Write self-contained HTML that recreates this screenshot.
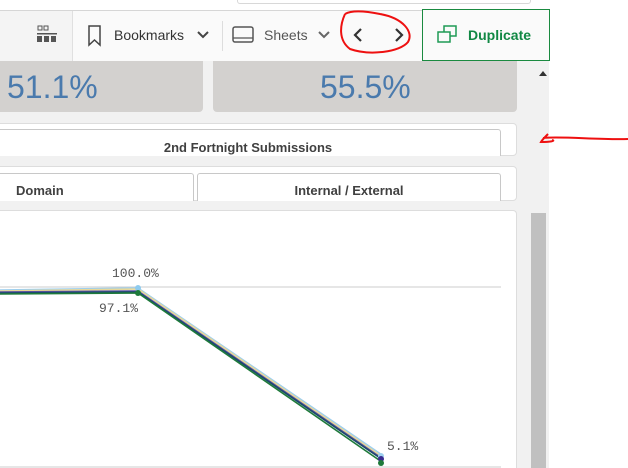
<!DOCTYPE html>
<html><head><style>
*{margin:0;padding:0;box-sizing:border-box}
html,body{width:628px;height:468px;overflow:hidden}
body{background:#fff;font-family:"Liberation Sans",sans-serif;position:relative}
.a{position:absolute}
.btn{position:absolute;background:#fff;border:1px solid #c8c8c8;border-bottom:none;border-radius:3px 3px 0 0;font-weight:bold;font-size:13px;color:#404040;text-align:center}
</style></head><body>
<div class="a" style="left:237px;top:0;width:294px;height:4px;border:1px solid #d8d8d8;border-top:none;border-radius:0 0 3px 3px"></div>
<div class="a" style="left:0;top:10px;width:549px;height:51px;background:#fafafa;border-top:1px solid #d6d6d6"></div>
<div class="a" style="left:0;top:11px;width:73px;height:50px;background:#f4f4f4;border-right:1px solid #e0e0e0"></div>
<svg class="a" style="left:37px;top:25px" width="22" height="20"><g fill="#555"><rect x="1" y="1" width="4" height="4" fill="none" stroke="#555" stroke-width="1"/><rect x="7" y="1" width="4" height="4" fill="none" stroke="#555" stroke-width="1"/><rect x="0" y="8" width="20" height="1.5"/><rect x="0" y="11" width="5" height="6"/><rect x="7" y="11" width="5" height="6"/><rect x="14" y="11" width="5" height="6"/></g></svg>
<svg class="a" style="left:87px;top:25px" width="16" height="22"><path d="M2 1h11v19l-5.5-5-5.5 5z" fill="none" stroke="#444" stroke-width="1.5"/></svg>
<div class="a" style="left:114px;top:27px;font-size:14px;color:#333">Bookmarks</div>
<svg class="a" style="left:196px;top:30px" width="14" height="10"><path d="M2 2l5 5 5-5" fill="none" stroke="#444" stroke-width="2"/></svg>
<div class="a" style="left:222px;top:21px;width:1px;height:30px;background:#ddd"></div>
<svg class="a" style="left:232px;top:26px" width="24" height="18"><rect x="1" y="1" width="20" height="15" rx="2" fill="none" stroke="#555" stroke-width="1.5"/><path d="M1 12h20" stroke="#555" stroke-width="1.2"/></svg>
<div class="a" style="left:264px;top:27px;font-size:14px;color:#555">Sheets</div>
<svg class="a" style="left:317px;top:30px" width="14" height="10"><path d="M2 2l5 5 5-5" fill="none" stroke="#666" stroke-width="2"/></svg>
<svg class="a" style="left:350px;top:26px" width="60" height="20"><path d="M11 3l-6 6 6 6M46 3l6 6-6 6" fill="none" stroke="#333" stroke-width="2.2"/></svg>
<div class="a" style="left:422px;top:9px;width:128px;height:52px;border:1px solid #1a8a40;background:#fafafa"></div>
<svg class="a" style="left:437px;top:25px" width="24" height="20"><rect x="7" y="1" width="12" height="10" fill="none" stroke="#1e9a55" stroke-width="1.5"/><rect x="1" y="7" width="12" height="10" fill="#fafafa" stroke="#1e9a55" stroke-width="1.5"/></svg>
<div class="a" style="left:468px;top:27px;font-size:14px;font-weight:bold;color:#118844">Duplicate</div>
<div class="a" style="left:0;top:61px;width:549px;height:407px;background:#f1f1f1"></div>
<div class="a" style="left:0;top:61px;width:203px;height:51px;background:#d3d1cf;border-radius:0 0 4px 0"></div>
<div class="a" style="left:213px;top:61px;width:304px;height:51px;background:#d3d1cf;border-radius:0 0 4px 4px"></div>
<div class="a" style="left:7px;top:69px;font-size:32px;color:#4a7aad">51.1%</div>
<div class="a" style="left:320px;top:69px;font-size:32px;color:#4a7aad">55.5%</div>
<svg class="a" style="left:536px;top:68px" width="14" height="10"><path d="M3 8l4-5 4 5z" fill="#333"/></svg>
<div class="a" style="left:531px;top:213px;width:15px;height:255px;background:#c0c0c0"></div>
<div class="a" style="left:-5px;top:123px;width:522px;height:33px;background:#fff;border:1px solid #ddd;border-radius:4px"></div>
<div class="btn" style="left:-5px;top:129px;width:506px;height:27px;line-height:36px">2nd Fortnight Submissions</div>
<div class="a" style="left:-5px;top:166px;width:522px;height:35px;background:#fff;border:1px solid #ddd;border-radius:4px"></div>
<div class="btn" style="left:-5px;top:173px;width:199px;height:28px;line-height:34px;text-align:left;padding-left:20px">Domain</div>
<div class="btn" style="left:197px;top:173px;width:304px;height:28px;line-height:34px">Internal / External</div>
<div class="a" style="left:-5px;top:210px;width:522px;height:258px;background:#fff;border:1px solid #ddd;border-bottom:none;border-radius:4px 4px 0 0"></div>
<svg class="a" style="left:0;top:210px" width="520" height="258">
<path d="M0 77H501M0 257H501" stroke="#ccc" stroke-width="1"/>
<g fill="none" stroke-width="1.6">
<path d="M0 80L138 78 382 245" stroke="#9ecfee"/>
<path d="M0 81L138 79 381 246" stroke="#e8d898"/>
<path d="M0 82L138 81 380 247" stroke="#5a4fa0"/>
<path d="M0 83L138 82 380 248" stroke="#1a4a6a"/>
<path d="M0 84L138 83 379 250" stroke="#1e7a3a"/>
</g>
<circle cx="138" cy="78" r="3" fill="#8ecbee"/><circle cx="138" cy="83" r="3" fill="#1e7a3a"/>
<circle cx="381" cy="246" r="3" fill="#9ecfee"/><circle cx="381" cy="249" r="3" fill="#3a2a90"/><circle cx="381" cy="253" r="3" fill="#1e7a3a"/>
<g font-family="Liberation Mono,monospace" font-size="13" fill="#555"><text x="112" y="67">100.0%</text><text x="99" y="102">97.1%</text><text x="387" y="240">5.1%</text></g>
</svg>
<svg class="a" style="left:0;top:0" width="628" height="468">
<g fill="none" stroke="#ee1010" stroke-width="2">
<path d="M345 14C340 25 338 40 350 49 370 56 400 52 408 42 414 32 403 18 380 14 365 11 352 10 345 14"/>
<path d="M548 134C545 137 542 140 541 142 550 142 556 141 552 140M543 138C560 136 600 140 628 139"/>
</g></svg>
</body></html>
